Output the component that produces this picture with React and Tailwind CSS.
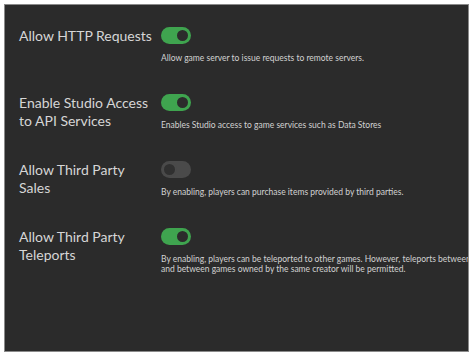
const settings = [
  {
    title: ['Allow HTTP Requests'],
    on: true,
    desc: ['Allow game server to issue requests to remote servers.'],
  },
  {
    title: ['Enable Studio Access', 'to API Services'],
    on: true,
    desc: ['Enables Studio access to game services such as Data Stores'],
  },
  {
    title: ['Allow Third Party', 'Sales'],
    on: false,
    desc: ['By enabling, players can purchase items provided by third parties.'],
  },
  {
    title: ['Allow Third Party', 'Teleports'],
    on: true,
    desc: [
      'By enabling, players can be teleported to other games. However, teleports between places in the same game,',
      'and between games owned by the same creator will be permitted.',
    ],
  },
];

const Toggle = ({ on }) => {
  return (
    <div
      className={`w-[30px] h-[17px] rounded-full flex items-center px-[1px] ${
        on ? 'bg-[#3fa44f] justify-end' : 'bg-[#4a4a4a] justify-start'
      }`}
    >
      <div
        className={`w-[15px] h-[15px] rounded-full border-2 ${
          on ? 'bg-[#2c2c2c] border-[#3fa44f]' : 'bg-[#303030] border-[#4a4a4a]'
        }`}
      />
    </div>
  );
};

const App = () => {
  return (
    <div className="w-[474px] h-[357px] bg-white p-[4px] pr-[5px] pb-[5px]">
      <div
        className="h-full bg-[#2b2b2b] border border-[#8a8a8a] overflow-hidden pt-[22px] pl-[14px]"
        style={{ fontFamily: 'Lato, "Liberation Sans", sans-serif' }}
      >
        {settings.map((s, i) => (
          <div key={i} className="flex h-[67px]">
            <div className="w-[142px] shrink-0 text-[14px] leading-[18px] text-[#d6d6d6] whitespace-nowrap">
              {s.title.map((t, j) => (
                <div key={j}>{t}</div>
              ))}
            </div>
            <div className="flex flex-col min-w-0">
              <Toggle on={s.on} />
              <div className="mt-[9px] text-[8.5px] leading-[10px] text-[#d2d2d2] whitespace-nowrap">
                {s.desc.map((d, j) => (
                  <div key={j}>{d}</div>
                ))}
              </div>
            </div>
          </div>
        ))}
      </div>
    </div>
  );
};

export default App;
